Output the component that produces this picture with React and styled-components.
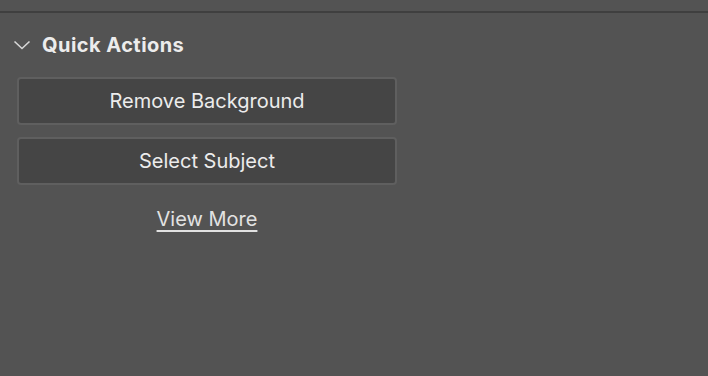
import React from "react";
import styled, { createGlobalStyle } from "styled-components";

const Global = createGlobalStyle`
  html, body { margin: 0; padding: 0; background: #535353; }
  body { font-family: Inter, "Noto Sans", "Liberation Sans", sans-serif; }
`;

const Page = styled.div`
  width: 708px;
  height: 376px;
  background: #535353;
  display: flex;
  flex-direction: column;
`;

const TopGap = styled.div`
  height: 11px;
  background: #535353;
`;

const Divider = styled.div`
  height: 2px;
  background: #3f3f3f;
`;

const Panel = styled.section`
  display: flex;
  flex-direction: column;
  padding: 20px 0 0 17px;
  width: 380px;
`;

const Header = styled.div`
  display: flex;
  align-items: center;
  gap: 11px;
  margin-left: -4px;
  height: 24px;
`;

const Title = styled.h2`
  margin: 0;
  font-size: 20px;
  font-weight: 700;
  color: #ececec;
  letter-spacing: 0.45px;
`;

const Actions = styled.div`
  display: flex;
  flex-direction: column;
  gap: 12px;
  margin-top: 20px;
`;

const ActionButton = styled.button`
  box-sizing: border-box;
  width: 380px;
  height: 48px;
  background: #454545;
  border: 2px solid #5f5f5f;
  border-radius: 4px;
  color: #ececec;
  font-family: inherit;
  font-size: 20px;
  font-weight: 400;
  display: flex;
  align-items: center;
  justify-content: center;
  padding: 0;
`;

const MoreLink = styled.a`
  align-self: center;
  margin-top: 22px;
  font-size: 20px;
  color: #e2e2e2;
  text-decoration: underline;
  text-underline-offset: 4px;
  text-decoration-thickness: 2px;
`;

export default function App() {
  return (
    <Page>
      <Global />
      <TopGap />
      <Divider />
      <Panel>
        <Header>
          <svg width="18" height="10" viewBox="0 0 18 10">
            <path d="M1.5 1.5 L9 8.5 L16.5 1.5" fill="none" stroke="#d8d8d8" strokeWidth="1.6" />
          </svg>
          <Title>Quick Actions</Title>
        </Header>
        <Actions>
          <ActionButton>Remove Background</ActionButton>
          <ActionButton>Select Subject</ActionButton>
        </Actions>
        <MoreLink>View More</MoreLink>
      </Panel>
    </Page>
  );
}
